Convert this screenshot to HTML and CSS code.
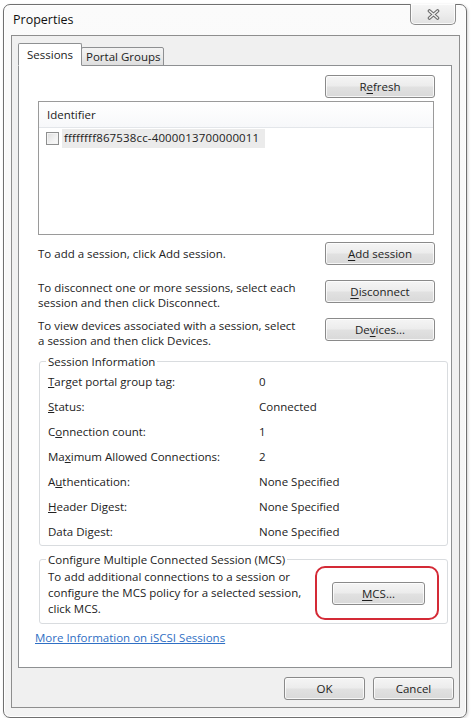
FILE: index.html
```html
<!DOCTYPE html>
<html>
<head>
<meta charset="utf-8">
<link rel="stylesheet" href="styles.css">
</head>
<body>
<div class="window">
  <div class="titlebar">
    <span class="title">Properties</span>
    <div class="close">
      <svg width="13" height="11" viewBox="0 0 13 11">
        <path d="M2.5 2 L10.5 9 M10.5 2 L2.5 9" stroke="#6b6b6b" stroke-width="3.6" stroke-linecap="round" fill="none"/>
        <path d="M2.5 2 L10.5 9 M10.5 2 L2.5 9" stroke="#f0f0f0" stroke-width="1.5" stroke-linecap="round" fill="none"/>
      </svg>
    </div>
  </div>
  <div class="client">
    <div class="tabs">
      <div class="tab active">Sessions</div>
      <div class="tab">Portal Groups</div>
    </div>
    <div class="panel">
      <div class="refresh-row"><button class="btn wide">R<u>e</u>fresh</button></div>
      <div class="listbox">
        <div class="lb-head">Identifier</div>
        <div class="lb-item"><span class="check"></span><span class="lb-text">ffffffff867538cc-4000013700000011</span></div>
      </div>
      <div class="action first">
        <p class="desc single">To add a session, click Add session.</p>
        <button class="btn wide"><u>A</u>dd session</button>
      </div>
      <div class="action">
        <p class="desc">To disconnect one or more sessions, select each<br>session and then click Disconnect.</p>
        <button class="btn wide"><u>D</u>isconnect</button>
      </div>
      <div class="action third">
        <p class="desc">To view devices associated with a session, select<br>a session and then click Devices.</p>
        <button class="btn wide">De<u>v</u>ices...</button>
      </div>
      <fieldset class="group info">
        <legend>Session Information</legend>
        <div class="info-grid">
          <span><u>T</u>arget portal group tag:</span><span>0</span>
          <span><u>S</u>tatus:</span><span>Connected</span>
          <span>C<u>o</u>nnection count:</span><span>1</span>
          <span>Ma<u>x</u>imum Allowed Connections:</span><span>2</span>
          <span>A<u>u</u>thentication:</span><span>None Specified</span>
          <span><u>H</u>eader Digest:</span><span>None Specified</span>
          <span>Data Digest:</span><span>None Specified</span>
        </div>
      </fieldset>
      <fieldset class="group mcs">
        <legend>Configure Multiple Connected Session (MCS)</legend>
        <div class="mcs-body">
          <p class="desc mcs-text">To add additional connections to a session or<br>configure the MCS policy for a selected session,<br>click MCS.</p>
          <div class="highlight"><button class="btn mcs-btn"><u>M</u>CS...</button></div>
        </div>
      </fieldset>
      <a class="link" href="#">More Information on iSCSI Sessions</a>
    </div>
    <div class="footer">
      <button class="btn foot">OK</button>
      <button class="btn foot">Cancel</button>
    </div>
  </div>
</div>
</body>
</html>
```
FILE: styles.css
```css
* { box-sizing: border-box; }
html, body { margin: 0; padding: 0; background: #ffffff; }
body {
  font-family: "Open Sans", "Noto Sans", "Liberation Sans", sans-serif;
  font-size: 11.5px;
  color: #222;
}
.window {
  margin: 4px 0 0 3px;
  width: 464px;
  height: 714px;
  border: 1px solid #707070;
  border-radius: 7px;
  background: linear-gradient(180deg, #fbfbfb 0%, #f3f3f3 100%);
  box-shadow: inset 0 0 0 1px #ffffff, 1px 1px 3px rgba(0,0,0,0.18);
  display: flex;
  flex-direction: column;
}
.titlebar {
  height: 30px;
  display: flex;
  justify-content: space-between;
  align-items: flex-start;
  padding-left: 9px;
  flex: none;
}
.title {
  font-size: 12.5px;
  line-height: 15px;
  margin-top: 7px;
  color: #111;
}
.close {
  margin-top: -1px;
  margin-right: 10px;
  width: 46px;
  height: 21px;
  border: 1px solid #8c8c8c;
  border-top: none;
  border-radius: 0 0 5px 5px;
  background: linear-gradient(180deg, #f6f6f6 0%, #ececec 55%, #e2e2e2 100%);
  box-shadow: inset 0 0 0 1px rgba(255,255,255,0.8);
  display: flex;
  align-items: center;
  justify-content: center;
}
.client {
  margin: 0 0 0 7px;
  width: 449px;
  height: 673px;
  border: 1px solid #8e8e8e;
  background: #f0f0f0;
  padding: 7px 0 0 6px;
  display: flex;
  flex-direction: column;
}
.tabs {
  display: flex;
  align-items: flex-end;
  margin-bottom: -1px;
  height: 23px;
  flex: none;
}
.tab {
  height: 19px;
  border: 1px solid #8e9092;
  border-radius: 2px 2px 0 0;
  background: linear-gradient(180deg, #f3f3f3 0%, #ebebeb 50%, #dedede 100%);
  padding: 0 3px 0 4px;
  line-height: 17px;
  margin-left: -1px;
  white-space: nowrap;
}
.tab.active {
  position: relative;
  z-index: 1;
  height: 23px;
  width: 64px;
  margin-left: 0;
  background: #ffffff;
  border-bottom-color: #ffffff;
  padding: 0 0 0 8px;
  line-height: 22px;
}
.panel {
  width: 434px;
  height: 603px;
  border: 1px solid #8e9092;
  background: #ffffff;
  padding: 9px 16px 0 19px;
  flex: none;
}
.refresh-row {
  display: flex;
  justify-content: flex-end;
}
.btn {
  font-family: inherit;
  font-size: 11.5px;
  color: #1e1e1e;
  height: 23px;
  border: 1px solid #8a8a8a;
  border-radius: 3px;
  background: linear-gradient(180deg, #f5f5f5 0%, #ececec 48%, #e1e1e1 52%, #d9d9d9 100%);
  box-shadow: inset 0 0 0 1px rgba(255,255,255,0.75);
  padding: 0;
  line-height: 20px;
  flex: none;
}
.btn u { text-underline-offset: 2px; }
.wide { width: 110px; }
.listbox {
  margin-top: 3px;
  width: 396px;
  height: 134px;
  border: 1px solid #9a9a9a;
  background: #fff;
}
.lb-head {
  height: 26px;
  line-height: 25px;
  padding-left: 8px;
  border-bottom: 1px solid #e3e6ea;
  background: linear-gradient(180deg, #ffffff 0%, #f7f8fa 100%);
}
.lb-item {
  display: flex;
  align-items: center;
  height: 19px;
  padding-left: 7px;
  margin-top: 1px;
}
.check {
  width: 13px;
  height: 13px;
  border: 1px solid #8e8f8f;
  background: linear-gradient(135deg, #dcdcdc 0%, #f2f2f2 60%, #fafafa 100%);
  box-shadow: inset 0 0 0 1px #f4f4f4;
  flex: none;
}
.lb-text {
  margin-left: 3px;
  background: #ebebeb;
  height: 19px;
  line-height: 18px;
  padding: 0 6px 0 2px;
  letter-spacing: 0.15px;
}
.action {
  display: flex;
  justify-content: space-between;
  align-items: flex-start;
  margin-top: 15px;
}
.action.first { margin-top: 7px; }
.action.third { margin-top: 8px; }
.desc {
  margin: 0;
  line-height: 15px;
  color: #222;
}
.desc.single { margin-top: 4px; }
.group {
  margin: 6px 0 0 1px;
  width: 409px;
  border: 1px solid #d9dcdf;
  border-radius: 3px;
  padding: 0 8px 1px 8px;
}
.group legend {
  padding: 0 2px;
  margin-left: -2px;
  line-height: 15px;
}
.info-grid {
  display: grid;
  grid-template-columns: 211px 1fr;
  grid-auto-rows: 25px;
  align-items: center;
}
.group.mcs {
  margin-top: 6px;
  padding: 0 8px 3px 8px;
}
.mcs-body {
  display: flex;
  justify-content: space-between;
  align-items: flex-start;
}
.mcs-text {
  margin-top: 2px;
  line-height: 16px;
}
.highlight {
  margin-top: -1px;
  width: 124px;
  height: 54px;
  border: 2px solid #d42a36;
  border-radius: 10px;
  padding: 14px 0 0 15px;
}
.mcs-btn { width: 93px; }
.link {
  display: inline-block;
  margin: 6px 0 0 -3px;
  line-height: 15px;
  color: #2f6fc4;
  text-decoration: underline;
}
.footer {
  display: flex;
  justify-content: flex-end;
  gap: 8px;
  margin-top: 9px;
  padding-right: 5px;
}
.foot { width: 81px; }
```
